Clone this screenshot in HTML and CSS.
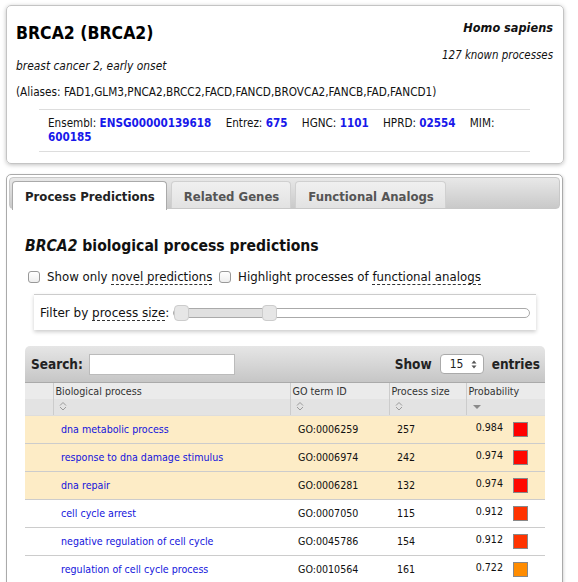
FILE: index.html
```html
<!DOCTYPE html>
<html>
<head>
<meta charset="utf-8">
<link rel="stylesheet" href="styles.css">
</head>
<body>
<div class="gene-card">
  <div class="gene-top">
    <div class="gene-main">
      <h1 class="gene-title">BRCA2 (BRCA2)</h1>
      <div class="gene-desc">breast cancer 2, early onset</div>
    </div>
    <div class="gene-side">
      <div class="species">Homo sapiens</div>
      <div class="known">127 known processes</div>
    </div>
  </div>
  <div class="aliases">(Aliases: FAD1,GLM3,PNCA2,BRCC2,FACD,FANCD,BROVCA2,FANCB,FAD,FANCD1)</div>
  <div class="xrefs">
    <span class="xi">Ensembl: <a class="xref">ENSG00000139618</a></span>
    <span class="xi">Entrez: <a class="xref">675</a></span>
    <span class="xi">HGNC: <a class="xref">1101</a></span>
    <span class="xi">HPRD: <a class="xref">02554</a></span>
    <span class="xi">MIM: <a class="xref">600185</a></span>
  </div>
</div>

<div class="tabs-panel">
  <div class="tab-bar">
    <div class="tab active">Process Predictions</div>
    <div class="tab">Related Genes</div>
    <div class="tab">Functional Analogs</div>
  </div>
  <div class="tab-content">
    <h2 class="section-title"><i>BRCA2</i> biological process predictions</h2>
    <div class="options">
      <label class="opt"><span class="cb"></span>Show only <span class="dotted">novel predictions</span></label>
      <label class="opt"><span class="cb"></span>Highlight processes of <span class="dotted">functional analogs</span></label>
    </div>
    <div class="filter-box">
      <span class="filter-label">Filter by <span class="dotted">process size</span>:</span>
      <div class="slider">
        <div class="slider-range"></div>
        <span class="handle h1"></span>
        <span class="handle h2"></span>
      </div>
    </div>
    <div class="table-wrap">
      <div class="table-head">
        <div class="search">Search: <span class="search-input"></span></div>
        <div class="show">Show <span class="select"><span class="sel-val">15</span><svg class="arrows" width="6" height="9" viewBox="0 0 6 9"><path d="M0.5 3.5 L3 0.5 L5.5 3.5 Z M0.5 5.5 L3 8.5 L5.5 5.5 Z" fill="#555"/></svg></span> entries</div>
      </div>
      <table class="grid">
        <thead>
          <tr>
            <th class="c0"></th>
            <th class="c1">Biological process<svg class="sort" width="8" height="10" viewBox="0 0 8 10"><path d="M1 4.5 L4 1.5 L7 4.5 M1 6 L4 9 L7 6" fill="none" stroke="#9a9a9a" stroke-width="1"/></svg></th>
            <th class="c2">GO term ID<svg class="sort" width="8" height="10" viewBox="0 0 8 10"><path d="M1 4.5 L4 1.5 L7 4.5 M1 6 L4 9 L7 6" fill="none" stroke="#9a9a9a" stroke-width="1"/></svg></th>
            <th class="c3">Process size<svg class="sort" width="8" height="10" viewBox="0 0 8 10"><path d="M1 4.5 L4 1.5 L7 4.5 M1 6 L4 9 L7 6" fill="none" stroke="#9a9a9a" stroke-width="1"/></svg></th>
            <th class="c4">Probability<svg class="sort" width="10" height="10" viewBox="0 0 10 10"><path d="M1 4 L9 4 L5 8 Z" fill="#8a8a8a"/></svg></th>
          </tr>
        </thead>
        <tbody>
          <tr class="hl"><td></td><td><a class="proc">dna metabolic process</a></td><td>GO:0006259</td><td>257</td><td class="prob"><span class="pv">0.984</span><span class="sw" style="background:#ff0000"></span></td></tr>
          <tr class="hl"><td></td><td><a class="proc">response to dna damage stimulus</a></td><td>GO:0006974</td><td>242</td><td class="prob"><span class="pv">0.974</span><span class="sw" style="background:#ff0800"></span></td></tr>
          <tr class="hl"><td></td><td><a class="proc">dna repair</a></td><td>GO:0006281</td><td>132</td><td class="prob"><span class="pv">0.974</span><span class="sw" style="background:#ff0800"></span></td></tr>
          <tr><td></td><td><a class="proc">cell cycle arrest</a></td><td>GO:0007050</td><td>115</td><td class="prob"><span class="pv">0.912</span><span class="sw" style="background:#ff3300"></span></td></tr>
          <tr><td></td><td><a class="proc">negative regulation of cell cycle</a></td><td>GO:0045786</td><td>154</td><td class="prob"><span class="pv">0.912</span><span class="sw" style="background:#ff3300"></span></td></tr>
          <tr><td></td><td><a class="proc">regulation of cell cycle process</a></td><td>GO:0010564</td><td>161</td><td class="prob"><span class="pv">0.722</span><span class="sw" style="background:#ff8c00"></span></td></tr>
        </tbody>
      </table>
    </div>
  </div>
</div>
</body>
</html>
```
FILE: styles.css
```css
* { box-sizing: border-box; }
body {
  margin: 0;
  padding: 5px 0 0 6px;
  font-family: "DejaVu Sans Condensed", "DejaVu Sans", Verdana, sans-serif;
  font-stretch: condensed;
  font-size: 11px;
  color: #111;
  background: #fff;
  width: 578px;
  overflow: hidden;
}
.gene-card {
  width: 558px;
  border: 1px solid #c4c4c4;
  border-radius: 5px;
  box-shadow: 0 1px 4px rgba(0,0,0,0.25);
  padding: 14px 10px 11px 9px;
}
.gene-top { display: flex; justify-content: space-between; }
.gene-title { margin: 3px 0 0; font-size: 17.5px; font-weight: bold; color: #000; }
.gene-desc { font-style: italic; font-size: 11.9px; margin-top: 16px; }
.gene-side { text-align: right; }
.species { font-weight: bold; font-style: italic; font-size: 12.6px; }
.known { font-style: italic; font-size: 11.4px; margin-top: 13px; }
.aliases { margin-top: 12px; font-size: 11.7px; }
.xrefs {
  margin: 10px 23px 0 23px;
  border-top: 1px solid #ddd;
  border-bottom: 1px solid #ddd;
  padding: 6px 8px 7px 9px;
  line-height: 14px;
  font-size: 11.6px;
}
.xi { margin-right: 11px; }
.xref { color: #1818ea; font-weight: bold; }

.tabs-panel {
  margin-top: 10px;
  width: 557px;
  height: 420px;
  border: 1px solid #aaa;
  border-radius: 5px;
  padding: 2px;
  box-shadow: 1px 1px 3px rgba(0,0,0,0.15);
}
.tab-bar {
  display: flex;
  gap: 4px;
  height: 32px;
  padding: 3px 0 0 2px;
  border: 1px solid #c8c8c8;
  border-radius: 4px;
  background: linear-gradient(#e8e8e8, #c9c9c9);
}
.tab {
  padding: 7px 11px 0 12px;
  font-weight: bold;
  font-size: 13px;
  color: #555;
  background: linear-gradient(#f0f0f0, #e2e2e2);
  border: 1px solid #d0d0d0;
  border-bottom: none;
  border-radius: 4px 4px 0 0;
}
.tab.active {
  color: #222;
  background: #fff;
  border-color: #aaa;
  height: 29px;
}
.tab-content { padding: 0 17px 0 16px; }
.section-title { margin: 28px 0 0 0; font-size: 15.6px; font-weight: bold; }
.options { margin-top: 14px; font-size: 13.1px; padding-left: 3px; }
.opt { display: inline-block; margin-right: 3px; }
.cb {
  display: inline-block; width: 12px; height: 12px; vertical-align: -2px;
  border: 1px solid #999; border-radius: 3px; margin-right: 7px;
  background: linear-gradient(#fff, #eee);
}
.dotted { border-bottom: 1px dashed #333; }
.filter-box {
  margin: 10px 0 0 9px;
  width: 502px;
  height: 36px;
  display: flex;
  align-items: center;
  padding: 0 6px;
  border-top: 1px solid #ccc;
  box-shadow: 0 2px 4px rgba(0,0,0,0.2);
}
.filter-label { font-family: "DejaVu Sans", Verdana, sans-serif; font-stretch: normal; font-size: 12px; }
.slider {
  position: relative;
  margin-left: 4px;
  flex: 1;
  height: 10px;
  border: 1px solid #aaa;
  border-radius: 5px;
  background: #fff;
}
.slider-range { width: 82px; height: 100%; background: #e0e0e0; margin-left: 8px; }
.handle {
  position: absolute; top: -4px; width: 15px; height: 16px;
  border: 1px solid #ccc; border-radius: 4px; background: #e6e6e6;
}
.h1 { left: 0; }
.h2 { left: 88px; }
.table-wrap { margin-top: 16px; width: 520px; }
.table-head {
  display: flex; justify-content: space-between; align-items: center;
  height: 37px; padding: 0 5px 0 6px;
  border-radius: 5px 5px 0 0;
  background: linear-gradient(#e6e6e6, #c6c6c6);
  border-bottom: 1px solid #aaa;
  font-weight: bold; font-size: 13.5px; color: #222;
}
.search { display: flex; align-items: center; }
.search-input { display: inline-block; width: 146px; height: 21px; background: #fff; border: 1px solid #bbb; margin-left: 6px; }
.show { display: flex; align-items: center; }
.select {
  display: inline-flex; justify-content: space-between; align-items: center;
  width: 44px; height: 20px; margin: 0 8px 0 8px; padding: 0 6px 0 9px;
  border: 1px solid #aaa; border-radius: 4px; background: #fff;
  font-weight: normal; font-size: 12px;
}
.grid { border-collapse: collapse; width: 520px; table-layout: fixed; }
.grid th {
  text-align: left; font-weight: normal; font-size: 10.7px; color: #333;
  height: 32px; vertical-align: top; padding: 2px 0 0 2px;
  background: linear-gradient(#ebebeb 50%, #e3e3e3 50%);
  border-left: 1px solid #ccc;
  border-bottom: 1px solid #ddd;
  line-height: 13px;
}
.grid th.c0 { border-left: none; }
.c0 { width: 28px; }
.c1 { width: 237px; }
.c2 { width: 99px; }
.c3 { width: 77px; }
.c4 { width: 79px; }
.sort { display: block; margin: 3px 0 0 3px; }
.grid td {
  height: 28px; border-bottom: 1px solid #ccc; padding: 0 0 0 8px;
  font-size: 10.6px; color: #111;
}
.grid tr.hl td { background: #fdecc6; }
.proc { color: #1414dc; }
.prob { text-align: right; padding: 0 17px 0 0 !important; }
.pv { vertical-align: middle; position: relative; top: -2px; }
.sw {
  display: inline-block; width: 15px; height: 15px; margin-left: 10px;
  border: 1px solid #888; vertical-align: middle;
}
```
